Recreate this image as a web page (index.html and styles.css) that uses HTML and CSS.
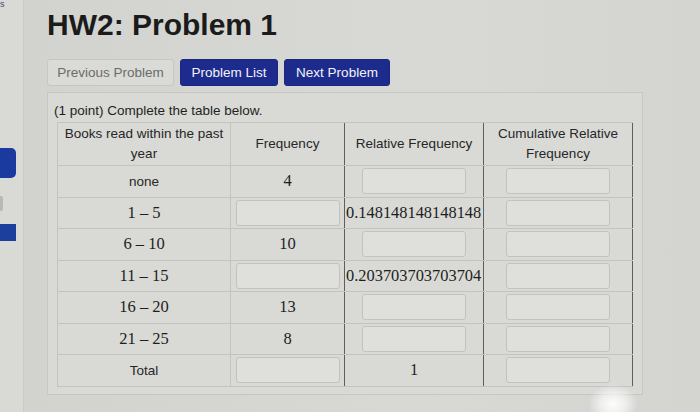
FILE: index.html
```html
<!DOCTYPE html>
<html>
<head>
<meta charset="utf-8">
<link rel="stylesheet" href="styles.css">
</head>
<body>
<div class="screen">
  <aside class="sidebar">
    <span class="side-s">s</span>
    <div class="side-tab"></div>
    <div class="side-gray"></div>
    <div class="side-block"></div>
  </aside>
  <main class="main">
    <h1 class="title">HW2: Problem 1</h1>
    <nav class="nav">
      <button class="btn btn-light">Previous Problem</button>
      <button class="btn btn-blue">Problem List</button>
      <button class="btn btn-blue btn-next">Next Problem</button>
    </nav>
    <section class="panel">
      <p class="prompt">(1 point) Complete the table below.</p>
      <table class="freq">
        <thead>
          <tr>
            <th class="c1">Books read within the past year</th>
            <th class="c2">Frequency</th>
            <th class="c3 dark">Relative Frequency</th>
            <th class="c4 dark">Cumulative Relative Frequency</th>
          </tr>
        </thead>
        <tbody>
          <tr>
            <td class="sans">none</td>
            <td class="num">4</td>
            <td class="dark"><span class="box"></span></td>
            <td class="dark"><span class="box"></span></td>
          </tr>
          <tr>
            <td class="num">1 – 5</td>
            <td><span class="box"></span></td>
            <td class="dark num rel">0.148148148148148</td>
            <td class="dark"><span class="box"></span></td>
          </tr>
          <tr>
            <td class="num">6 – 10</td>
            <td class="num">10</td>
            <td class="dark"><span class="box"></span></td>
            <td class="dark"><span class="box"></span></td>
          </tr>
          <tr>
            <td class="num">11 – 15</td>
            <td><span class="box"></span></td>
            <td class="dark num rel">0.203703703703704</td>
            <td class="dark"><span class="box"></span></td>
          </tr>
          <tr>
            <td class="num">16 – 20</td>
            <td class="num">13</td>
            <td class="dark"><span class="box"></span></td>
            <td class="dark"><span class="box"></span></td>
          </tr>
          <tr>
            <td class="num">21 – 25</td>
            <td class="num">8</td>
            <td class="dark"><span class="box"></span></td>
            <td class="dark"><span class="box"></span></td>
          </tr>
          <tr>
            <td class="sans">Total</td>
            <td><span class="box"></span></td>
            <td class="dark num">1</td>
            <td class="dark"><span class="box"></span></td>
          </tr>
        </tbody>
      </table>
    </section>
  </main>
  <div class="glare"></div>
</div>
</body>
</html>
```
FILE: styles.css
```css
html, body {
  margin: 0;
  padding: 0;
}
body {
  width: 700px;
  height: 412px;
  overflow: hidden;
  background: #d4d5d1;
  font-family: "Liberation Sans", Arial, sans-serif;
  color: #222;
}
.screen {
  position: relative;
  display: flex;
  height: 412px;
  background: linear-gradient(90deg, #d2d3cf 0%, #d8d9d5 60%, #d4d5d1 100%);
}
.sidebar {
  width: 24px;
  flex: none;
  background: #d9dad6;
  border-right: 1px solid #cacbc7;
  display: flex;
  flex-direction: column;
  box-sizing: border-box;
}
.side-s {
  font-size: 9px;
  line-height: 8px;
  color: #3a4a7a;
  height: 8px;
}
.side-tab {
  margin-top: 140px;
  width: 16px;
  height: 30px;
  background: #1a3aa0;
  border-radius: 0 5px 5px 0;
}
.side-gray {
  margin-top: 18px;
  width: 3px;
  height: 15px;
  background: #b8b9b5;
  border-radius: 0 2px 2px 0;
}
.side-block {
  margin-top: 13px;
  width: 16px;
  height: 17px;
  background: #1c3f9e;
}
.main {
  flex: 1;
  padding-left: 23px;
}
.title {
  margin: 8px 0 0 0;
  font-size: 30px;
  line-height: 34px;
  font-weight: bold;
  color: #1b1b1b;
}
.nav {
  display: flex;
  gap: 6px;
  margin-top: 17px;
}
.btn {
  height: 27px;
  padding: 0;
  border-radius: 3px;
  font-family: "Liberation Sans", Arial, sans-serif;
  font-size: 13.5px;
  white-space: nowrap;
  box-sizing: border-box;
  border: 1px solid transparent;
}
.btn-light {
  width: 127px;
  background: #dadbd7;
  border-color: #c6c7c3;
  color: #6b6c6a;
}
.btn-blue {
  width: 98px;
  background: #1d2b8c;
  border-color: #1a2680;
  color: #f2f3f7;
}
.btn-next {
  width: 106px;
}
.panel {
  margin-top: 6px;
  width: 596px;
  height: 303px;
  box-sizing: border-box;
  border: 1px solid #c6c7c3;
  background: #d9dad6;
  padding: 9px 8px 0 6px;
}
.prompt {
  margin: 0;
  font-size: 13.5px;
  line-height: 17px;
  color: #1f1f1f;
}
.freq {
  margin-left: 3px;
  margin-top: 3px;
  border-collapse: collapse;
  border: 1px solid #5e5f5c;
  table-layout: fixed;
  width: 574px;
}
.freq th, .freq td {
  border-top: 1px solid #c3c4c0;
  border-bottom: 1px solid #c3c4c0;
  border-left: 1px solid #c3c4c0;
  text-align: center;
  vertical-align: middle;
  padding: 0;
}
.freq th {
  height: 42px;
  font-weight: normal;
  font-size: 13.5px;
  line-height: 20px;
  color: #262626;
}
.freq td {
  height: 30.5px;
}
.freq th.dark, .freq td.dark {
  border-left: 1px solid #5e5f5c;
}
.c1 { width: 172px; }
.c2 { width: 113px; }
.c3 { width: 138px; }
.c4 { width: 148px; }
.sans {
  font-size: 13.5px;
  color: #262626;
}
.num {
  font-family: "Liberation Serif", "Times New Roman", serif;
  font-size: 16.5px;
  color: #1e1e1e;
}
.freq td.rel {
  text-align: left;
  padding-left: 1px;
  font-size: 16.4px;
}
.box {
  display: inline-block;
  vertical-align: middle;
  width: 104px;
  height: 26px;
  box-sizing: border-box;
  border: 1px solid #c2c3bf;
  border-radius: 3px;
  background: #dfe0dc;
}
.glare {
  position: absolute;
  left: 588px;
  top: 384px;
  width: 50px;
  height: 40px;
  border-radius: 50%;
  background: radial-gradient(ellipse at center, rgba(255,255,255,0.95) 0%, rgba(255,255,255,0.6) 35%, rgba(255,255,255,0) 70%);
  pointer-events: none;
}
```
